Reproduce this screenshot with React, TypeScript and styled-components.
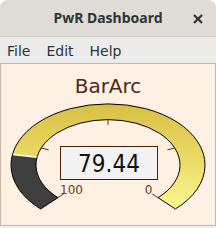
import React from "react";
import styled, { createGlobalStyle } from "styled-components";

const Global = createGlobalStyle`
  html, body { margin: 0; padding: 0; background: #ffffff; }
  #root { width: 216px; height: 228px; }
`;

const Window = styled.div`
  width: 216px;
  height: 228px;
  display: flex;
  flex-direction: column;
  background: #f4f1ee;
  border-radius: 8px 8px 0 0;
  overflow: hidden;
  box-sizing: border-box;
`;

const TitleBar = styled.div`
  position: relative;
  height: 36px;
  flex: 0 0 36px;
  display: flex;
  align-items: center;
  justify-content: center;
  background: #dfdcd8;
  border-bottom: 1px solid #cfcbc6;
  padding-top: 2px;
  box-sizing: content-box;
  margin-top: -2px;
`;

const TitleText = styled.span`
  font-family: "Noto Sans", "DejaVu Sans", sans-serif;
  font-weight: 700;
  font-size: 14px;
  color: #2e3436;
  line-height: 36px;
`;

const CloseButton = styled.div`
  position: absolute;
  right: 13px;
  top: 16px;
  width: 10px;
  height: 10px;
  display: flex;
`;

const MenuBar = styled.div`
  height: 26px;
  flex: 0 0 26px;
  display: flex;
  align-items: center;
  background: #ebebea;
  padding-top: 2px;
  box-sizing: border-box;
`;

const MenuItem = styled.span`
  font-family: "DejaVu Sans", sans-serif;
  font-size: 14px;
  color: #2e3436;
  padding: 0 8px;
  line-height: 24px;
  &:first-child { padding-left: 7px; }
`;

const Panel = styled.div`
  height: 163px;
  flex: 0 0 163px;
  box-sizing: border-box;
  border: 1px solid #cdb4a2;
  background: #fff0e4;
  display: flex;
  flex-direction: column;
  align-items: center;
`;

const GaugeTitle = styled.div`
  font-family: "DejaVu Sans", sans-serif;
  font-size: 20px;
  line-height: 20px;
  color: #4b2a12;
  margin-top: 12px;
`;

const GaugeWrap = styled.div`
  position: relative;
  width: 214px;
  height: 116px;
`;

const Readout = styled.div`
  position: absolute;
  left: 59px;
  top: 50px;
  width: 98px;
  height: 34px;
  box-sizing: border-box;
  border: 1px solid #4a1e00;
  background: #f2f2f2;
  display: flex;
  align-items: center;
  justify-content: center;
  font-family: "DejaVu Sans Condensed", "DejaVu Sans", sans-serif;
  font-size: 24px;
  color: #111111;
  padding-top: 1px;
`;

const CX = 108;
const CY = 165;
const K = 0.63;
const RO = 97;
const RI = 72;
const START = 226; // value 100
const END = -46; // value 0

const pt = (phi: number, r: number) => {
  const a = (phi * Math.PI) / 180;
  return [CX + r * Math.cos(a), CY - K * r * Math.sin(a)];
};
const f = (p: number[]) => `${p[0].toFixed(2)} ${p[1].toFixed(2)}`;
const band = (p1: number, p2: number) => {
  const large = p1 - p2 > 180 ? 1 : 0;
  return `M ${f(pt(p1, RO))} A ${RO} ${RO * K} 0 ${large} 1 ${f(pt(p2, RO))} L ${f(
    pt(p2, RI)
  )} A ${RI} ${RI * K} 0 ${large} 0 ${f(pt(p1, RI))} Z`;
};
const phiOf = (v: number) => END + ((START - END) * v) / 100;

const Gauge: React.FC<{ value: number }> = ({ value }) => {
  const pv = phiOf(value);
  const sepO = pt(pv, RO);
  const sepI = pt(pv, RI);
  return (
    <svg width="214" height="116" viewBox="1 96 214 116">
      <defs>
        <linearGradient id="gold" x1="0" y1="104" x2="0" y2="208" gradientUnits="userSpaceOnUse">
          <stop offset="0" stopColor="#d9bf44" />
          <stop offset="0.5" stopColor="#e9d864" />
          <stop offset="1" stopColor="#fbf792" />
        </linearGradient>
      </defs>
      <path d={band(pv, END)} fill="url(#gold)" />
      <path d={band(START, pv)} fill="#3f3f3f" />
      <line x1={sepO[0]} y1={sepO[1]} x2={sepI[0]} y2={sepI[1]} stroke="#ffffff" strokeWidth="1.6" />
      <path d={band(START, END)} fill="none" stroke="#000000" strokeWidth="1" />
      {[0, 25, 50, 75, 100].map((v) => {
        const a = pt(phiOf(v), RI);
        const b = pt(phiOf(v), RI - 8);
        return <line key={v} x1={a[0]} y1={a[1]} x2={b[0]} y2={b[1]} stroke="#5a2a08" strokeWidth="1" />;
      })}
      <text x="60" y="193.5" fontFamily="DejaVu Sans, sans-serif" fontSize="12" fill="#6b3a1a">
        100
      </text>
      <text x="152.5" y="193.5" textAnchor="end" fontFamily="DejaVu Sans, sans-serif" fontSize="12" fill="#6b3a1a">
        0
      </text>
    </svg>
  );
};

export default function App() {
  const value = 79.44;
  return (
    <>
      <Global />
      <Window>
        <TitleBar>
          <TitleText>PwR Dashboard</TitleText>
          <CloseButton>
            <svg width="10" height="10" viewBox="0 0 10 10">
              <path d="M1 1 L9 9 M9 1 L1 9" stroke="#2e3436" strokeWidth="2.2" strokeLinecap="butt" />
            </svg>
          </CloseButton>
        </TitleBar>
        <MenuBar>
          <MenuItem>File</MenuItem>
          <MenuItem>Edit</MenuItem>
          <MenuItem>Help</MenuItem>
        </MenuBar>
        <Panel>
          <GaugeTitle>BarArc</GaugeTitle>
          <GaugeWrap>
            <Gauge value={value} />
            <Readout>{value.toFixed(2)}</Readout>
          </GaugeWrap>
        </Panel>
      </Window>
    </>
  );
}
